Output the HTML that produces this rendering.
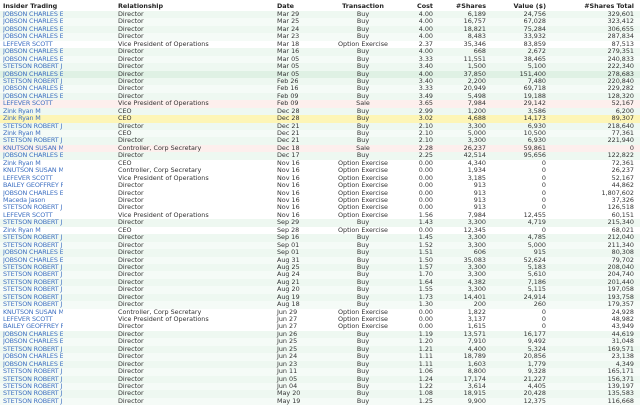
<!DOCTYPE html>
<html><head><meta charset="utf-8"><style>
*{margin:0;padding:0;box-sizing:border-box}
body{width:640px;height:409px;background:#fff;font-family:"DejaVu Sans","Liberation Sans",sans-serif;font-size:6.4px;color:#333;overflow:hidden;position:relative}
.r{position:absolute;left:0;width:640px;height:7.44px;line-height:7.44px;white-space:nowrap}
.r span{position:absolute;top:0}
.n{left:3px;color:#3d6fc1;width:60px;overflow:hidden;letter-spacing:-0.15px}
.l{left:118px}
.d{left:277px}
.t{left:330px;width:66px;text-align:center}
.c{right:207px}
.s{right:154px}
.v{right:94px}
.o{right:6px}
.h{top:2px;font-weight:bold;color:#222;background:#fff}
.h .n{color:#222;width:auto;letter-spacing:0}
.a{background:#eef8f1}.b{background:#f5fbf7}
.w{background:#fff}.p{background:#fdefed}.y{background:#fdf5b6}.g{background:#dff1e4}
</style></head><body>
<div class="r h" style="top:3px"><span class="n">Insider Trading</span><span class="l">Relationship</span><span class="d">Date</span><span class="t">Transaction</span><span class="c">Cost</span><span class="s">#Shares</span><span class="v">Value ($)</span><span class="o">#Shares Total</span></div>

<div class="r a" style="top:11px"><span class="n">JOBSON CHARLES E</span><span class="l">Director</span><span class="d">Mar 29</span><span class="t">Buy</span><span class="c">4.00</span><span class="s">6,189</span><span class="v">24,756</span><span class="o">329,601</span></div>
<div class="r b" style="top:18.44px"><span class="n">JOBSON CHARLES E</span><span class="l">Director</span><span class="d">Mar 25</span><span class="t">Buy</span><span class="c">4.00</span><span class="s">16,757</span><span class="v">67,028</span><span class="o">323,412</span></div>
<div class="r a" style="top:25.88px"><span class="n">JOBSON CHARLES E</span><span class="l">Director</span><span class="d">Mar 24</span><span class="t">Buy</span><span class="c">4.00</span><span class="s">18,821</span><span class="v">75,284</span><span class="o">306,655</span></div>
<div class="r b" style="top:33.32px"><span class="n">JOBSON CHARLES E</span><span class="l">Director</span><span class="d">Mar 23</span><span class="t">Buy</span><span class="c">4.00</span><span class="s">8,483</span><span class="v">33,932</span><span class="o">287,834</span></div>
<div class="r w" style="top:40.76px"><span class="n">LEFEVER SCOTT</span><span class="l">Vice President of Operations</span><span class="d">Mar 18</span><span class="t">Option Exercise</span><span class="c">2.37</span><span class="s">35,346</span><span class="v">83,859</span><span class="o">87,513</span></div>
<div class="r a" style="top:48.2px"><span class="n">JOBSON CHARLES E</span><span class="l">Director</span><span class="d">Mar 16</span><span class="t">Buy</span><span class="c">4.00</span><span class="s">668</span><span class="v">2,672</span><span class="o">279,351</span></div>
<div class="r b" style="top:55.64px"><span class="n">JOBSON CHARLES E</span><span class="l">Director</span><span class="d">Mar 05</span><span class="t">Buy</span><span class="c">3.33</span><span class="s">11,551</span><span class="v">38,465</span><span class="o">240,833</span></div>
<div class="r a" style="top:63.08px"><span class="n">STETSON ROBERT J</span><span class="l">Director</span><span class="d">Mar 05</span><span class="t">Buy</span><span class="c">3.40</span><span class="s">1,500</span><span class="v">5,100</span><span class="o">222,340</span></div>
<div class="r g" style="top:70.52px"><span class="n">JOBSON CHARLES E</span><span class="l">Director</span><span class="d">Mar 05</span><span class="t">Buy</span><span class="c">4.00</span><span class="s">37,850</span><span class="v">151,400</span><span class="o">278,683</span></div>
<div class="r a" style="top:77.96px"><span class="n">STETSON ROBERT J</span><span class="l">Director</span><span class="d">Feb 26</span><span class="t">Buy</span><span class="c">3.40</span><span class="s">2,200</span><span class="v">7,480</span><span class="o">220,840</span></div>
<div class="r b" style="top:85.4px"><span class="n">JOBSON CHARLES E</span><span class="l">Director</span><span class="d">Feb 16</span><span class="t">Buy</span><span class="c">3.33</span><span class="s">20,949</span><span class="v">69,718</span><span class="o">229,282</span></div>
<div class="r a" style="top:92.84px"><span class="n">JOBSON CHARLES E</span><span class="l">Director</span><span class="d">Feb 09</span><span class="t">Buy</span><span class="c">3.49</span><span class="s">5,498</span><span class="v">19,188</span><span class="o">128,320</span></div>
<div class="r p" style="top:100.28px"><span class="n">LEFEVER SCOTT</span><span class="l">Vice President of Operations</span><span class="d">Feb 09</span><span class="t">Sale</span><span class="c">3.65</span><span class="s">7,984</span><span class="v">29,142</span><span class="o">52,167</span></div>
<div class="r a" style="top:107.72px"><span class="n">Zink Ryan M</span><span class="l">CEO</span><span class="d">Dec 28</span><span class="t">Buy</span><span class="c">2.99</span><span class="s">1,200</span><span class="v">3,586</span><span class="o">6,200</span></div>
<div class="r y" style="top:115.16px"><span class="n">Zink Ryan M</span><span class="l">CEO</span><span class="d">Dec 28</span><span class="t">Buy</span><span class="c">3.02</span><span class="s">4,688</span><span class="v">14,173</span><span class="o">89,307</span></div>
<div class="r a" style="top:122.6px"><span class="n">STETSON ROBERT J</span><span class="l">Director</span><span class="d">Dec 21</span><span class="t">Buy</span><span class="c">2.10</span><span class="s">3,300</span><span class="v">6,930</span><span class="o">218,640</span></div>
<div class="r b" style="top:130.04px"><span class="n">Zink Ryan M</span><span class="l">CEO</span><span class="d">Dec 21</span><span class="t">Buy</span><span class="c">2.10</span><span class="s">5,000</span><span class="v">10,500</span><span class="o">77,361</span></div>
<div class="r a" style="top:137.48px"><span class="n">STETSON ROBERT J</span><span class="l">Director</span><span class="d">Dec 21</span><span class="t">Buy</span><span class="c">2.10</span><span class="s">3,300</span><span class="v">6,930</span><span class="o">221,940</span></div>
<div class="r p" style="top:144.92px"><span class="n">KNUTSON SUSAN M</span><span class="l">Controller, Corp Secretary</span><span class="d">Dec 18</span><span class="t">Sale</span><span class="c">2.28</span><span class="s">26,237</span><span class="v">59,861</span><span class="o">0</span></div>
<div class="r a" style="top:152.36px"><span class="n">JOBSON CHARLES E</span><span class="l">Director</span><span class="d">Dec 17</span><span class="t">Buy</span><span class="c">2.25</span><span class="s">42,514</span><span class="v">95,656</span><span class="o">122,822</span></div>
<div class="r w" style="top:159.8px"><span class="n">Zink Ryan M</span><span class="l">CEO</span><span class="d">Nov 16</span><span class="t">Option Exercise</span><span class="c">0.00</span><span class="s">4,340</span><span class="v">0</span><span class="o">72,361</span></div>
<div class="r w" style="top:167.24px"><span class="n">KNUTSON SUSAN M</span><span class="l">Controller, Corp Secretary</span><span class="d">Nov 16</span><span class="t">Option Exercise</span><span class="c">0.00</span><span class="s">1,934</span><span class="v">0</span><span class="o">26,237</span></div>
<div class="r w" style="top:174.68px"><span class="n">LEFEVER SCOTT</span><span class="l">Vice President of Operations</span><span class="d">Nov 16</span><span class="t">Option Exercise</span><span class="c">0.00</span><span class="s">3,185</span><span class="v">0</span><span class="o">52,167</span></div>
<div class="r w" style="top:182.12px"><span class="n">BAILEY GEOFFREY R</span><span class="l">Director</span><span class="d">Nov 16</span><span class="t">Option Exercise</span><span class="c">0.00</span><span class="s">913</span><span class="v">0</span><span class="o">44,862</span></div>
<div class="r w" style="top:189.56px"><span class="n">JOBSON CHARLES E</span><span class="l">Director</span><span class="d">Nov 16</span><span class="t">Option Exercise</span><span class="c">0.00</span><span class="s">913</span><span class="v">0</span><span class="o">1,807,602</span></div>
<div class="r w" style="top:197px"><span class="n">Maceda Jason</span><span class="l">Director</span><span class="d">Nov 16</span><span class="t">Option Exercise</span><span class="c">0.00</span><span class="s">913</span><span class="v">0</span><span class="o">37,326</span></div>
<div class="r w" style="top:204.44px"><span class="n">STETSON ROBERT J</span><span class="l">Director</span><span class="d">Nov 16</span><span class="t">Option Exercise</span><span class="c">0.00</span><span class="s">913</span><span class="v">0</span><span class="o">126,518</span></div>
<div class="r w" style="top:211.88px"><span class="n">LEFEVER SCOTT</span><span class="l">Vice President of Operations</span><span class="d">Nov 16</span><span class="t">Option Exercise</span><span class="c">1.56</span><span class="s">7,984</span><span class="v">12,455</span><span class="o">60,151</span></div>
<div class="r a" style="top:219.32px"><span class="n">STETSON ROBERT J</span><span class="l">Director</span><span class="d">Sep 29</span><span class="t">Buy</span><span class="c">1.43</span><span class="s">3,300</span><span class="v">4,719</span><span class="o">215,340</span></div>
<div class="r w" style="top:226.76px"><span class="n">Zink Ryan M</span><span class="l">CEO</span><span class="d">Sep 28</span><span class="t">Option Exercise</span><span class="c">0.00</span><span class="s">12,345</span><span class="v">0</span><span class="o">68,021</span></div>
<div class="r a" style="top:234.2px"><span class="n">STETSON ROBERT J</span><span class="l">Director</span><span class="d">Sep 16</span><span class="t">Buy</span><span class="c">1.45</span><span class="s">3,300</span><span class="v">4,785</span><span class="o">212,040</span></div>
<div class="r b" style="top:241.64px"><span class="n">STETSON ROBERT J</span><span class="l">Director</span><span class="d">Sep 01</span><span class="t">Buy</span><span class="c">1.52</span><span class="s">3,300</span><span class="v">5,000</span><span class="o">211,340</span></div>
<div class="r a" style="top:249.08px"><span class="n">JOBSON CHARLES E</span><span class="l">Director</span><span class="d">Sep 01</span><span class="t">Buy</span><span class="c">1.51</span><span class="s">606</span><span class="v">915</span><span class="o">80,308</span></div>
<div class="r b" style="top:256.52px"><span class="n">JOBSON CHARLES E</span><span class="l">Director</span><span class="d">Aug 31</span><span class="t">Buy</span><span class="c">1.50</span><span class="s">35,083</span><span class="v">52,624</span><span class="o">79,702</span></div>
<div class="r a" style="top:263.96px"><span class="n">STETSON ROBERT J</span><span class="l">Director</span><span class="d">Aug 25</span><span class="t">Buy</span><span class="c">1.57</span><span class="s">3,300</span><span class="v">5,183</span><span class="o">208,040</span></div>
<div class="r b" style="top:271.4px"><span class="n">STETSON ROBERT J</span><span class="l">Director</span><span class="d">Aug 24</span><span class="t">Buy</span><span class="c">1.70</span><span class="s">3,300</span><span class="v">5,610</span><span class="o">204,740</span></div>
<div class="r a" style="top:278.84px"><span class="n">STETSON ROBERT J</span><span class="l">Director</span><span class="d">Aug 21</span><span class="t">Buy</span><span class="c">1.64</span><span class="s">4,382</span><span class="v">7,186</span><span class="o">201,440</span></div>
<div class="r b" style="top:286.28px"><span class="n">STETSON ROBERT J</span><span class="l">Director</span><span class="d">Aug 20</span><span class="t">Buy</span><span class="c">1.55</span><span class="s">3,300</span><span class="v">5,115</span><span class="o">197,058</span></div>
<div class="r a" style="top:293.72px"><span class="n">STETSON ROBERT J</span><span class="l">Director</span><span class="d">Aug 19</span><span class="t">Buy</span><span class="c">1.73</span><span class="s">14,401</span><span class="v">24,914</span><span class="o">193,758</span></div>
<div class="r b" style="top:301.16px"><span class="n">STETSON ROBERT J</span><span class="l">Director</span><span class="d">Aug 18</span><span class="t">Buy</span><span class="c">1.30</span><span class="s">200</span><span class="v">260</span><span class="o">179,357</span></div>
<div class="r w" style="top:308.6px"><span class="n">KNUTSON SUSAN M</span><span class="l">Controller, Corp Secretary</span><span class="d">Jun 29</span><span class="t">Option Exercise</span><span class="c">0.00</span><span class="s">1,822</span><span class="v">0</span><span class="o">24,928</span></div>
<div class="r w" style="top:316.04px"><span class="n">LEFEVER SCOTT</span><span class="l">Vice President of Operations</span><span class="d">Jun 27</span><span class="t">Option Exercise</span><span class="c">0.00</span><span class="s">3,137</span><span class="v">0</span><span class="o">48,982</span></div>
<div class="r w" style="top:323.48px"><span class="n">BAILEY GEOFFREY R</span><span class="l">Director</span><span class="d">Jun 27</span><span class="t">Option Exercise</span><span class="c">0.00</span><span class="s">1,615</span><span class="v">0</span><span class="o">43,949</span></div>
<div class="r a" style="top:330.92px"><span class="n">JOBSON CHARLES E</span><span class="l">Director</span><span class="d">Jun 26</span><span class="t">Buy</span><span class="c">1.19</span><span class="s">13,571</span><span class="v">16,177</span><span class="o">44,619</span></div>
<div class="r b" style="top:338.36px"><span class="n">JOBSON CHARLES E</span><span class="l">Director</span><span class="d">Jun 25</span><span class="t">Buy</span><span class="c">1.20</span><span class="s">7,910</span><span class="v">9,492</span><span class="o">31,048</span></div>
<div class="r a" style="top:345.8px"><span class="n">STETSON ROBERT J</span><span class="l">Director</span><span class="d">Jun 25</span><span class="t">Buy</span><span class="c">1.21</span><span class="s">4,400</span><span class="v">5,324</span><span class="o">169,571</span></div>
<div class="r b" style="top:353.24px"><span class="n">JOBSON CHARLES E</span><span class="l">Director</span><span class="d">Jun 24</span><span class="t">Buy</span><span class="c">1.11</span><span class="s">18,789</span><span class="v">20,856</span><span class="o">23,138</span></div>
<div class="r a" style="top:360.68px"><span class="n">JOBSON CHARLES E</span><span class="l">Director</span><span class="d">Jun 23</span><span class="t">Buy</span><span class="c">1.11</span><span class="s">1,603</span><span class="v">1,779</span><span class="o">4,349</span></div>
<div class="r b" style="top:368.12px"><span class="n">STETSON ROBERT J</span><span class="l">Director</span><span class="d">Jun 11</span><span class="t">Buy</span><span class="c">1.06</span><span class="s">8,800</span><span class="v">9,328</span><span class="o">165,171</span></div>
<div class="r a" style="top:375.56px"><span class="n">STETSON ROBERT J</span><span class="l">Director</span><span class="d">Jun 05</span><span class="t">Buy</span><span class="c">1.24</span><span class="s">17,174</span><span class="v">21,227</span><span class="o">156,371</span></div>
<div class="r b" style="top:383px"><span class="n">STETSON ROBERT J</span><span class="l">Director</span><span class="d">Jun 04</span><span class="t">Buy</span><span class="c">1.22</span><span class="s">3,614</span><span class="v">4,405</span><span class="o">139,197</span></div>
<div class="r a" style="top:390.44px"><span class="n">STETSON ROBERT J</span><span class="l">Director</span><span class="d">May 20</span><span class="t">Buy</span><span class="c">1.08</span><span class="s">18,915</span><span class="v">20,428</span><span class="o">135,583</span></div>
<div class="r b" style="top:397.88px"><span class="n">STETSON ROBERT J</span><span class="l">Director</span><span class="d">May 19</span><span class="t">Buy</span><span class="c">1.25</span><span class="s">9,900</span><span class="v">12,375</span><span class="o">116,668</span></div>
</body></html>
